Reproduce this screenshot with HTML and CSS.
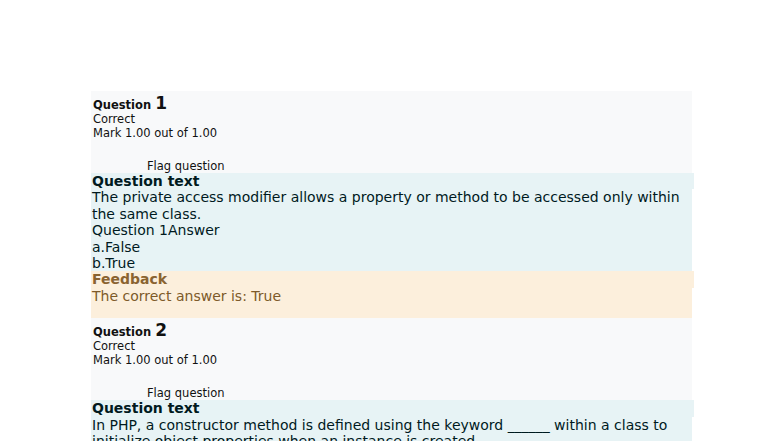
FILE: index.html
```html
<!DOCTYPE html>
<html lang="en">
<head>
<meta charset="utf-8">
<title>Quiz review</title>
<link rel="stylesheet" href="styles.css">
</head>
<body>
<div class="page">
  <div class="que">
    <div class="info">
      <h3 class="qno"><span class="qword">Question</span> <span class="num">1</span></h3>
      <div class="state">Correct</div>
      <div class="grade">Mark 1.00 out of 1.00</div>
      <div class="flag">Flag question</div>
    </div>
    <div class="content">
      <h4 class="heading">Question text</h4>
      <div class="qtext">The private access modifier allows a property or method to be accessed only within the same class.</div>
      <div class="prompt">Question 1Answer</div>
      <div class="answer">a.False</div>
      <div class="answer">b.True</div>
    </div>
    <div class="feedback">
      <h4 class="heading fb-heading">Feedback</h4>
      <div class="right">The correct answer is: True</div>
    </div>
  </div>
  <div class="que">
    <div class="info">
      <h3 class="qno"><span class="qword">Question</span> <span class="num">2</span></h3>
      <div class="state">Correct</div>
      <div class="grade">Mark 1.00 out of 1.00</div>
      <div class="flag">Flag question</div>
    </div>
    <div class="content">
      <h4 class="heading">Question text</h4>
      <div class="qtext">In PHP, a constructor method is defined using the keyword ______ within a class to initialize object properties when an instance is created.</div>
      <div class="prompt">Question 2Answer</div>
      <div class="answer">a.__construct()</div>
      <div class="answer">b.init()</div>
    </div>
  </div>
</div>
</body>
</html>
```

FILE: styles.css
```css
html, body {
  margin: 0;
  padding: 0;
  background: #ffffff;
}
body {
  font-family: "DejaVu Sans", Verdana, sans-serif;
  color: #000;
}
.page {
  padding-top: 91px;
  margin-left: 91px;
  width: 601px;
}
.info {
  background: #f8f9fa;
  padding: 7px 2px 0;
  font-size: 11.5px;
  line-height: 14px;
  color: #111;
}
.qno {
  margin: 0;
  font-size: 11.5px;
  font-weight: bold;
  line-height: 14px;
}
.num {
  font-size: 17px;
  line-height: 0;
}
.flag {
  margin-top: 19px;
  padding-left: 54px;
}
.content {
  background: #e7f3f5;
  color: #001a1e;
  font-size: 14px;
  line-height: 16.4px;
  padding-left: 1px;
}
.heading {
  margin: 0 -2px 0 0;
  font-size: 14px;
  font-weight: bold;
  line-height: 16.4px;
  background: inherit;
}
.feedback {
  background: #fcefdc;
  color: #7d5a29;
  font-size: 14px;
  line-height: 16.4px;
  padding: 0 0 14px 1px;
}
.fb-heading {
  color: #8a6330;
}
```
